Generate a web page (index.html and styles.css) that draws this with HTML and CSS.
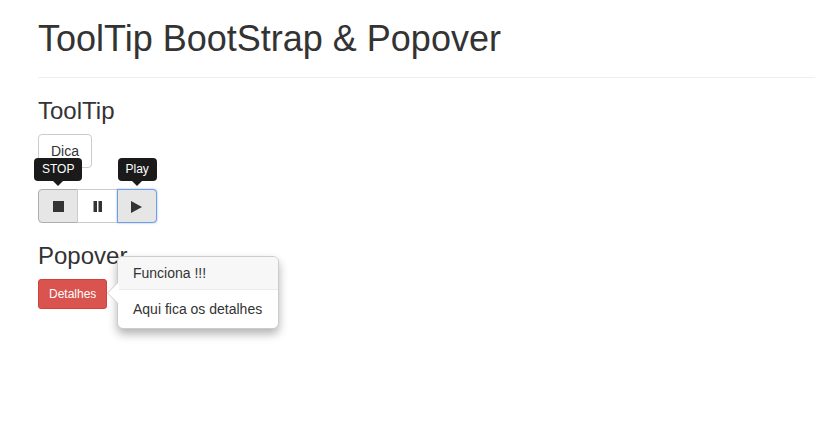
FILE: index.html
```html
<!DOCTYPE html>
<html>
<head>
  <title>ToolTip BootStrap &amp; Popover</title>
  <link rel="stylesheet" href="styles.css">
</head>
<body>
  <div class="page-header">
    <h1>ToolTip BootStrap &amp; Popover</h1>
  </div>

  <h3>ToolTip</h3>
  <button class="btn btn-default btn-dica">Dica</button>

  <div class="btn-group">
    <button class="btn btn-default btn-icon active">
      <svg width="11" height="11" viewBox="0 0 11 11"><rect width="11" height="11" fill="#333"/></svg>
      <span class="tooltip tooltip-stop">STOP</span>
    </button>
    <button class="btn btn-default btn-icon">
      <svg width="11" height="11" viewBox="0 0 11 11"><path d="M1.5 0h3.5v11H1.5zM6.5 0H10v11H6.5z" fill="#333"/></svg>
    </button>
    <button class="btn btn-default btn-icon active focus">
      <svg width="11" height="12" viewBox="0 0 11 12"><path d="M0 0l11 6L0 12z" fill="#333"/></svg>
      <span class="tooltip tooltip-play">Play</span>
    </button>
  </div>

  <h3>Popover</h3>
  <div class="popover-wrap">
    <button class="btn btn-danger btn-sm">Detalhes</button>
    <div class="popover">
      <div class="popover-title">Funciona !!!</div>
      <div class="popover-content">Aqui fica os detalhes</div>
    </div>
  </div>
</body>
</html>
```
FILE: styles.css
```css
* {
  box-sizing: border-box;
}

body {
  font-family: "Liberation Sans", Arial, sans-serif;
  font-size: 14px;
  line-height: 1.42857;
  color: #333;
  background-color: #fff;
  margin: 0;
  padding: 19px 0 0 38px;
  min-height: 100vh;
}

h1,
h3 {
  font-weight: 500;
  line-height: 1.1;
}

h1 {
  font-size: 36px;
  margin: 0 0 10px;
}

h3 {
  font-size: 24px;
  margin: 20px 0 10px;
}

.page-header {
  padding-bottom: 8px;
  border-bottom: 1px solid #eee;
}

.btn {
  display: inline-block;
  font-family: inherit;
  font-size: 14px;
  line-height: 1.42857;
  padding: 6px 12px;
  border: 1px solid transparent;
  border-radius: 4px;
  background: none;
  cursor: pointer;
}

.btn-default {
  color: #333;
  background-color: #fff;
  border-color: #ccc;
}

.btn-dica {
  padding: 7px 12px 5px;
}

.btn-danger {
  color: #fff;
  background-color: #d9534f;
  border-color: #d43f3a;
}

.btn-sm {
  font-size: 12px;
  line-height: 1.5;
  padding: 5px 10px;
  border-radius: 3px;
}

.btn-group {
  display: flex;
  margin-top: 21px;
}

.btn-icon {
  position: relative;
  display: flex;
  align-items: center;
  justify-content: center;
  width: 40.25px;
  height: 34px;
  padding: 2px 0 0;
  margin-left: -1px;
  border-radius: 0;
}

.btn-icon:first-child {
  margin-left: 0;
  border-radius: 4px 0 0 4px;
}

.btn-icon:last-child {
  border-radius: 0 4px 4px 0;
}

.btn-icon.active {
  background-color: #e6e6e6;
  border-color: #adadad;
}

.btn-icon.focus {
  z-index: 2;
  border-color: #6f9fdc;
  box-shadow: 0 0 2px rgba(102, 150, 233, 0.8);
}

.tooltip {
  position: absolute;
  top: -32px;
  padding: 3px 8px;
  font-size: 12px;
  line-height: 17px;
  color: #fff;
  background-color: #1a1a1a;
  border-radius: 4px;
}

.tooltip::after {
  content: "";
  position: absolute;
  left: 50%;
  bottom: -5px;
  margin-left: -5px;
  border-top: 5px solid #1a1a1a;
  border-left: 5px solid transparent;
  border-right: 5px solid transparent;
}

.tooltip-stop {
  left: -5px;
}

.tooltip-play {
  left: 0;
}

.popover-wrap {
  position: relative;
}

.popover {
  position: absolute;
  top: -23px;
  left: 79px;
  width: 162px;
  background-color: #fff;
  border: 1px solid #ccc;
  border-radius: 6px;
  box-shadow: 0 5px 10px rgba(0, 0, 0, 0.3);
}

.popover::before,
.popover::after {
  content: "";
  position: absolute;
  top: 50%;
  border-top: 11px solid transparent;
  border-bottom: 11px solid transparent;
  margin-top: -11px;
}

.popover::before {
  left: -11px;
  border-right: 11px solid #ccc;
}

.popover::after {
  left: -10px;
  border-right: 11px solid #fff;
}

.popover-title {
  padding: 8px 15px;
  font-size: 14px;
  line-height: 16px;
  background-color: #f7f7f7;
  border-bottom: 1px solid #ebebeb;
  border-radius: 5px 5px 0 0;
}

.popover-content {
  padding: 9px 15px;
  line-height: 20px;
}
```
